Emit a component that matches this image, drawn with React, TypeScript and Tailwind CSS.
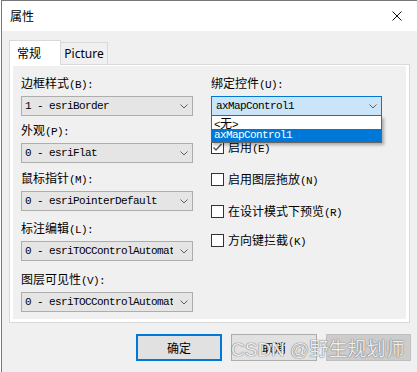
import clsx from 'clsx';

const mono = "font-['Liberation_Mono',monospace] text-[11px] tracking-[-0.6px]";

function Chevron() {
  return (
    <svg className="flex-shrink-0" fill="none" height="5" stroke="#5f5f5f" strokeWidth="1" viewBox="0 0 8 5" width="8">
      <path d="M0.5 0.5 L4 4 L7.5 0.5" />
    </svg>
  );
}

// label with SimSun-like half-width hotkey part
function Lbl({ text, hot, colon = true }: { text: string; hot: string; colon?: boolean }) {
  return (
    <span className="whitespace-nowrap leading-[16px]">
      {text}
      <span className={mono}>
        ({hot}){colon ? ':' : ''}
      </span>
    </span>
  );
}

function Combo({ value, focused }: { value: string; focused?: boolean }) {
  return (
    <div
      className={clsx(
        'flex h-[20px] items-center border pl-[3px] pr-[4px]',
        focused ? 'border-[#0078d7] bg-[#cce4f7] pl-[4px]' : 'border-[#adadad] bg-[#e5e5e5]',
      )}
    >
      <span className={`mr-[7px] min-w-0 flex-1 overflow-hidden whitespace-nowrap leading-[18px] ${mono}`}>{value}</span>
      <Chevron />
    </div>
  );
}

function Field({ text, hot, value, className }: { text: string; hot: string; value: string; className?: string }) {
  return (
    <div className={clsx('flex flex-col', className)}>
      <Lbl hot={hot} text={text} />
      <div className="mt-[3px]">
        <Combo value={value} />
      </div>
    </div>
  );
}

function Check({ text, hot, checked, className }: { text: string; hot: string; checked?: boolean; className?: string }) {
  return (
    <div className={clsx('flex h-[13px] items-center gap-[4px]', className)}>
      <div className="flex h-[13px] w-[13px] flex-shrink-0 items-center justify-center border border-[#333] bg-white">
        {checked && (
          <svg fill="none" height="11" stroke="#555" strokeWidth="1.4" viewBox="0 0 11 11" width="11">
            <path d="M1.5 5.5 L4 8 L9.5 2" />
          </svg>
        )}
      </div>
      <Lbl colon={false} hot={hot} text={text} />
    </div>
  );
}

export default function App() {
  return (
    <div className="h-[372px] w-[417px] overflow-hidden bg-white font-['Noto_Sans_CJK_SC',sans-serif] text-[12px] text-black">
      <div className="ml-px flex h-full flex-col border-l border-t border-[#777]">
        {/* Title bar */}
        <div className="flex h-[30px] flex-shrink-0 items-center justify-between bg-white pl-[8px] pr-[15px]">
          <span className="leading-none">属性</span>
          <svg fill="none" height="10" stroke="#111" strokeWidth="1" viewBox="0 0 10 10" width="10">
            <path d="M0.5 0.5 L9.5 9.5 M9.5 0.5 L0.5 9.5" />
          </svg>
        </div>

        <div className="relative flex flex-1 flex-col bg-[#f0f0f0] px-[7px] pt-[9px]">
          {/* Tabs */}
          <div className="relative z-10 -mb-px flex items-end">
            <div className="h-[25px] w-[52px] border-x border-t border-[#d9d9d9] bg-white pl-[7px] pt-[4px] leading-[16px]">
              常规
            </div>
            <div className="mb-px h-[22px] w-[47px] border-r border-t border-[#d9d9d9] pt-[3px] text-center font-['Noto_Sans',sans-serif] leading-[16px]">
              Picture
            </div>
          </div>

          {/* Tab panel */}
          <div className="h-[259px] border border-[#d9d9d9] bg-white px-[3px] pb-[3px] pt-px">
            <div className="flex h-full gap-[18px] bg-[#f0f0f0] pl-[8px] pt-[9px]">
              <div className="flex w-[172px] flex-col">
                <Field hot="B" text="边框样式" value="1 - esriBorder" />
                <Field className="mt-[6px]" hot="P" text="外观" value="0 - esriFlat" />
                <Field className="mt-[7px]" hot="M" text="鼠标指针" value="0 - esriPointerDefault" />
                <Field className="mt-[9px]" hot="L" text="标注编辑" value="0 - esriTOCControlAutomatic" />
                <Field className="mt-[10px]" hot="V" text="图层可见性" value="0 - esriTOCControlAutomatic" />
              </div>

              <div className="flex w-[171px] flex-col">
                <Lbl hot="U" text="绑定控件" />
                <div className="relative mt-[3px]">
                  <Combo focused value="axMapControl1" />
                  {/* open dropdown list */}
                  <div className="absolute left-0 top-full z-20 w-full border-x border-b border-[#646464] bg-white shadow-[2px_2px_3px_rgba(0,0,0,0.3)]">
                    <div className="h-[13px] pl-[2px] leading-[13px]">
                      <span className={mono}>&lt;</span>无<span className={mono}>&gt;</span>
                    </div>
                    <div className={`h-[13px] bg-[#0078d7] pl-[2px] leading-[13px] text-white ${mono}`}>axMapControl1</div>
                  </div>
                </div>
                <Check checked className="mt-[25px]" hot="E" text="启用" />
                <Check className="mt-[19px]" hot="N" text="启用图层拖放" />
                <Check className="mt-[19px]" hot="R" text="在设计模式下预览" />
                <Check className="mt-[16px]" hot="K" text="方向键拦截" />
              </div>
            </div>
          </div>

          {/* Buttons */}
          <div className="-mr-px mt-[11px] flex justify-end gap-[9px]">
            <button className="h-[27px] w-[86px] border-2 border-[#0078d7] bg-[#e1e1e1] leading-none" type="button">
              确定
            </button>
            <button className="h-[27px] w-[86px] border border-[#adadad] bg-[#e1e1e1] leading-none" type="button">
              取消
            </button>
            <button className="h-[27px] w-[85px] border border-[#bfbfbf] bg-[#cccccc]" disabled type="button" />
          </div>

          {/* Watermark */}
          <div className="pointer-events-none absolute left-[229px] top-[309px] z-30 whitespace-nowrap font-['Liberation_Sans','Noto_Sans_CJK_SC',sans-serif] text-[19px] leading-[19px] text-[#ececec] [text-shadow:0_0_1px_#6f6f6f,0_0_1px_#6f6f6f]">
            CSDN @野生规划师
          </div>
        </div>
      </div>
    </div>
  );
}
